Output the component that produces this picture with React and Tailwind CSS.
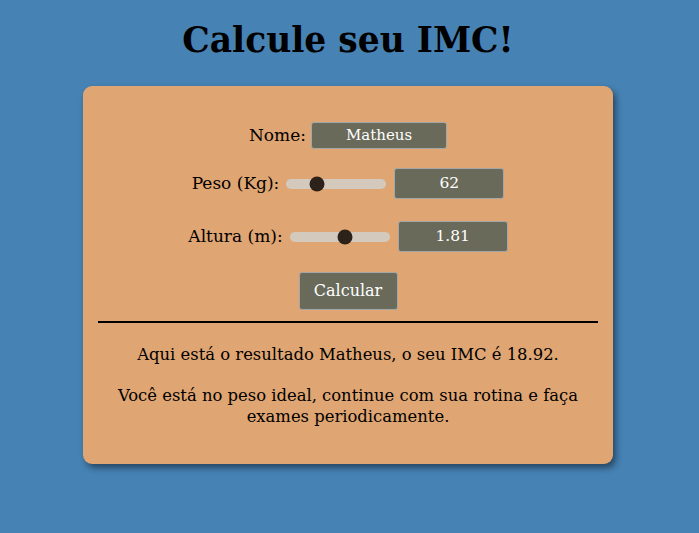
import React from "react";

function Slider({ pos }) {
  return (
    <div className="relative w-[100px] h-[10px] rounded-full bg-[#d4c9bd]">
      <div
        className="absolute top-1/2 -translate-y-1/2 -translate-x-1/2 w-[15px] h-[15px] rounded-full bg-[#2d2219]"
        style={{ left: pos }}
      />
    </div>
  );
}

export default function App() {
  return (
    <div
      className="min-h-[533px] bg-[#4682b4] flex flex-col items-center text-black pr-[3px]"
      style={{ fontFamily: '"DejaVu Serif", serif' }}
    >
      <h1 className="mt-[18px] text-[34.5px] leading-[44px] font-bold">Calcule seu IMC!</h1>
      <div className="mt-[24px] w-[530px] h-[378px] rounded-[9px] bg-[#dfa572] shadow-[3px_4px_6px_rgba(0,0,0,0.45)] px-[15px] flex flex-col items-center">
        <div className="mt-[36px] flex items-center gap-[5px] text-[17px]">
          <span>Nome:</span>
          <div className="w-[136px] h-[27px] rounded-[3px] border border-[#a4a7a6] bg-[#696a5a] text-white flex items-center justify-center text-[15px]">
            Matheus
          </div>
        </div>
        <div className="mt-[19px] flex items-center text-[17px]">
          <span className="mr-[7px]">Peso (Kg):</span>
          <Slider pos="31px" />
          <div className="ml-[8px] w-[110px] h-[31px] rounded-[3px] border border-[#a4a7a6] bg-[#696a5a] text-white flex items-center justify-center text-[15.5px]">
            62
          </div>
        </div>
        <div className="mt-[22px] flex items-center text-[17px]">
          <span className="mr-[7px]">Altura (m):</span>
          <Slider pos="55px" />
          <div className="ml-[8px] w-[110px] h-[31px] rounded-[3px] border border-[#a4a7a6] bg-[#696a5a] text-white flex items-center justify-center text-[15.5px]">
            1.81
          </div>
        </div>
        <div className="mt-[20px] w-[99px] h-[38px] rounded-[3px] border border-[#a4a7a6] bg-[#696a5a] text-white flex items-center justify-center text-[16px]">
          Calcular
        </div>
        <div className="mt-[11px] w-full h-[2px] bg-black" />
        <p className="mt-[22px] text-[16.4px] leading-[20px] text-center">
          Aqui está o resultado Matheus, o seu IMC é 18.92.
        </p>
        <p className="mt-[20px] text-[16.4px] leading-[21px] text-center px-[16px]">
          Você está no peso ideal, continue com sua rotina e faça exames periodicamente.
        </p>
      </div>
    </div>
  );
}
